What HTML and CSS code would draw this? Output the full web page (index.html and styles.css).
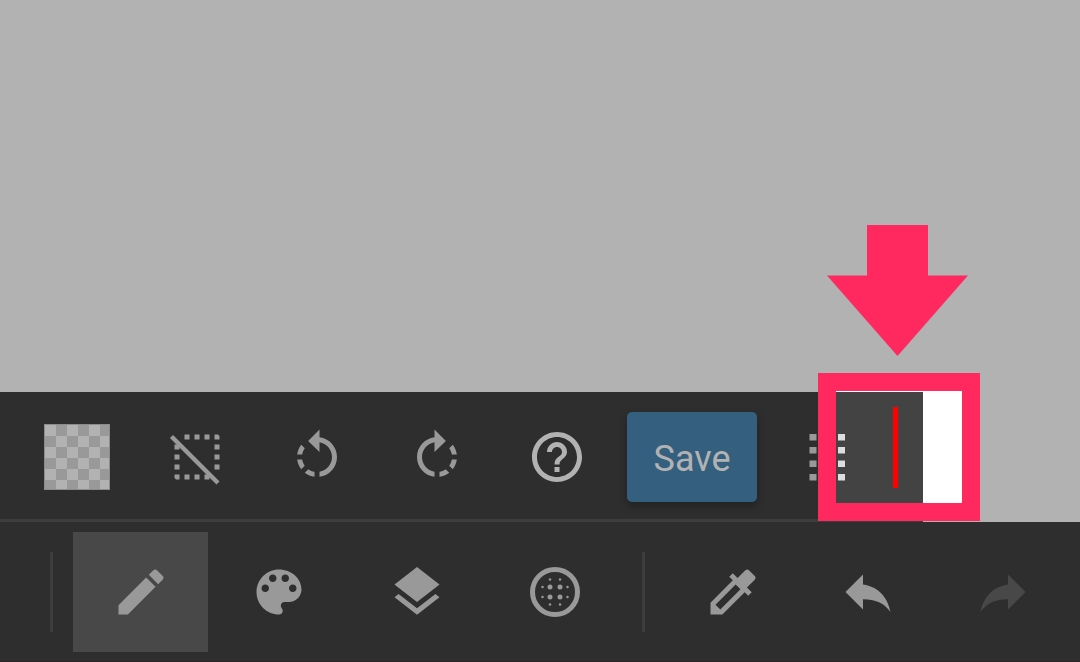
FILE: index.html
```html
<!DOCTYPE html>
<html lang="en">
<head>
    <meta charset="UTF-8">
    <meta name="viewport" content="width=device-width, initial-scale=1.0">
    <title>Paint</title>
    <link rel="stylesheet" href="styles.css">
</head>
<body>
    <main class="canvas"></main>

    <div class="toolbar">
        <button class="tool" aria-label="Background"><span class="checker"></span></button>
        <button class="tool" aria-label="Deselect">
            <svg class="icon" viewBox="0 0 60 60">
                <path d="M17.5 7.5h5v5h-5zM27.5 7.5h5v5h-5zM37.5 7.5h5v5h-5zM47.5 7.5h3.5l1.5 1.5v3.5h-5zM7.5 17.5h5v5h-5zM47.5 17.5h5v5h-5zM7.5 27.5h5v5h-5zM47.5 27.5h5v5h-5zM7.5 37.5h5v5h-5zM47.5 37.5h5v5h-5zM7.5 47.5h5v5H9l-1.5-1.5zM17.5 47.5h5v5h-5zM27.5 47.5h5v5h-5zM37.5 47.5h5v5h-5z"/>
                <path d="M4.5 9.5L51 56" fill="none" stroke="currentColor" stroke-width="4.5"/>
            </svg>
        </button>
        <button class="tool" aria-label="Rotate left">
            <svg class="icon" viewBox="0 0 24 24"><path d="M7.11 8.53L5.7 7.11C4.8 8.27 4.24 9.61 4.07 11h2.02c.14-.87.49-1.72 1.02-2.47zM6.09 13H4.07c.17 1.39.72 2.73 1.62 3.89l1.41-1.42c-.52-.75-.87-1.59-1.01-2.47zm1.01 5.32c1.16.9 2.51 1.44 3.9 1.61V17.9c-.87-.15-1.71-.49-2.46-1.03L7.1 18.32zM13 4.07V1L8.45 5.55 13 10V6.09c2.84.48 5 2.94 5 5.91s-2.16 5.43-5 5.91v2.02c3.95-.49 7-3.85 7-7.93s-3.05-7.44-7-7.93z"/></svg>
        </button>
        <button class="tool" aria-label="Rotate right">
            <svg class="icon" viewBox="0 0 24 24"><path d="M15.55 5.55L11 1v3.07C7.06 4.56 4 7.92 4 12s3.05 7.44 7 7.93v-2.02c-2.84-.48-5-2.94-5-5.91s2.16-5.43 5-5.91V10l4.55-4.45zM19.93 11c-.17-1.39-.72-2.73-1.62-3.89l-1.42 1.42c.54.75.88 1.6 1.02 2.47h2.02zM13 17.9v2.02c1.39-.17 2.74-.71 3.9-1.61l-1.44-1.44c-.75.54-1.59.89-2.46 1.03zm3.89-2.42l1.42 1.41c.9-1.16 1.45-2.5 1.62-3.89h-2.02c-.14.87-.48 1.72-1.02 2.48z"/></svg>
        </button>
        <button class="tool help" aria-label="Help">
            <svg class="icon" viewBox="0 0 24 24"><path d="M11 18h2v-2h-2v2zm1-16C6.48 2 2 6.48 2 12s4.48 10 10 10 10-4.48 10-10S17.52 2 12 2zm0 18c-4.41 0-8-3.59-8-8s3.59-8 8-8 8 3.59 8 8-3.59 8-8 8zm0-14c-2.21 0-4 1.79-4 4h2c0-1.1.9-2 2-2s2 .9 2 2c0 2-3 1.75-3 5h2c0-2.25 3-2.5 3-5 0-2.21-1.79-4-4-4z"/></svg>
        </button>
        <button class="save">Save</button>
        <button class="tool" aria-label="Stabilizer">
            <svg class="icon" viewBox="0 0 60 60"><path d="M12.5 7h7v6.500h-7zM12.500 20h7v6.500h-7zM12.500 33.500h7V40h-7zM12.500 47h7v6.500h-7z"/></svg>
        </button>

        <svg class="arrow" viewBox="0 0 141 131"><path d="M40 0h61v50.5h40L70.5 131 0 50.5h40z"/></svg>
        <div class="highlight">
            <div class="panel">
                <svg class="dots" viewBox="0 0 9 50"><path d="M2 2h7v6.500H2zM2 15h7v6.500H2zM2 28.500h7V35H2zM2 42h7v6.500H2z"/></svg>
                <span class="marker"></span>
            </div>
        </div>
    </div>

    <nav class="bottom-bar">
        <span class="divider"></span>
        <div class="modes">
            <button class="mode active" aria-label="Brush">
                <svg class="icon" viewBox="0 0 24 24"><path d="M3 17.25V21h3.75L17.81 9.94l-3.75-3.75L3 17.25zM20.71 7.04c.39-.39.39-1.02 0-1.41l-2.34-2.34c-.39-.39-1.02-.39-1.41 0l-1.83 1.83 3.75 3.75 1.83-1.83z"/></svg>
            </button>
            <button class="mode" aria-label="Color">
                <svg class="icon" viewBox="0 0 24 24"><path d="M12 3c-4.97 0-9 4.03-9 9s4.03 9 9 9c.83 0 1.5-.67 1.5-1.5 0-.39-.15-.74-.39-1.01-.23-.26-.38-.61-.38-.99 0-.83.67-1.5 1.5-1.5H16c2.76 0 5-2.24 5-5 0-4.42-4.03-8-9-8zm-5.5 9c-.83 0-1.5-.67-1.5-1.5S5.67 9 6.5 9 8 9.67 8 10.5 7.33 12 6.5 12zm3-4C8.67 8 8 7.33 8 6.5S8.67 5 9.5 5s1.5.67 1.5 1.5S10.33 8 9.5 8zm5 0c-.83 0-1.5-.67-1.5-1.5S13.67 5 14.5 5s1.5.67 1.5 1.5S15.33 8 14.5 8zm3 4c-.83 0-1.5-.67-1.5-1.5S16.67 9 17.5 9s1.5.67 1.5 1.5-.67 1.5-1.5 1.5z"/></svg>
            </button>
            <button class="mode" aria-label="Layers">
                <svg class="icon" viewBox="0 0 24 24"><path d="M11.99 18.54l-7.37-5.73L3 14.07l9 7 9-7-1.63-1.27-7.38 5.74zM12 16l7.36-5.73L21 9l-9-7-9 7 1.63 1.27L12 16z"/></svg>
            </button>
            <button class="mode" aria-label="Material">
                <svg class="icon" viewBox="0 0 24 24">
                    <circle cx="12" cy="12" r="9" fill="none" stroke="currentColor" stroke-width="2"/>
                    <circle cx="10" cy="10" r="1"/><circle cx="14" cy="10" r="1"/>
                    <circle cx="10" cy="14" r="1"/><circle cx="14" cy="14" r="1"/>
                    <circle cx="10" cy="7" r=".5"/><circle cx="14" cy="7" r=".5"/>
                    <circle cx="10" cy="17" r=".5"/><circle cx="14" cy="17" r=".5"/>
                    <circle cx="7" cy="10" r=".5"/><circle cx="7" cy="14" r=".5"/>
                    <circle cx="17" cy="10" r=".5"/><circle cx="17" cy="14" r=".5"/>
                </svg>
            </button>
        </div>
        <span class="divider"></span>
        <button class="mode" aria-label="Eyedropper">
            <svg class="icon" viewBox="0 0 24 24"><path d="M20.71 5.63l-2.34-2.34c-.39-.39-1.02-.39-1.41 0l-3.12 3.12-1.93-1.91-1.41 1.41 1.42 1.42L3 16.25V21h4.75l8.92-8.92 1.42 1.42 1.41-1.41-1.92-1.92 3.12-3.12c.4-.4.4-1.03.01-1.42zM6.92 19L5 17.08l8.06-8.06 1.92 1.92L6.92 19z"/></svg>
        </button>
        <button class="mode" aria-label="Undo">
            <svg class="icon" viewBox="0 0 24 24"><path d="M10 9V5l-7 7 7 7v-4.1c5 0 8.5 1.6 11 5.1-1-5-4-10-11-11z"/></svg>
        </button>
        <button class="mode" aria-label="Redo" disabled>
            <svg class="icon" viewBox="0 0 24 24"><path d="M14 9V5l7 7-7 7v-4.1c-5 0-8.5 1.6-11 5.1 1-5 4-10 11-11z"/></svg>
        </button>
    </nav>
</body>
</html>
```
FILE: styles.css
```css
* {
    box-sizing: border-box;
}
body {
    margin: 0;
    min-height: 100vh;
    display: flex;
    flex-direction: column;
    background: #b2b2b2;
    font-family: Roboto, sans-serif;
    overflow-x: hidden;
}
button {
    flex: none;
    display: flex;
    align-items: center;
    justify-content: center;
    padding: 0;
    border: none;
    background: none;
    color: #999;
    font-family: inherit;
    cursor: pointer;
}
.canvas {
    flex: 1;
}
.icon {
    width: 60px;
    height: 60px;
    fill: currentColor;
}

/* upper toolbar */
.toolbar {
    position: relative;
    align-self: flex-start;
    display: flex;
    align-items: center;
    padding: 20px 36px 17px 17px;
    background: #2e2e2e;
    border-bottom: 3px solid #3d3d3d;
}
.tool {
    width: 120px;
    height: 90px;
}
.help {
    color: #b2b2b2;
}
.checker {
    width: 66px;
    height: 66px;
    border: 1px solid #8c8c8c;
    background: repeating-conic-gradient(#999 0 25%, #b2b2b2 0 50%) 0 0 / 22px 22px;
}
.save {
    width: 130px;
    height: 90px;
    margin: 0 10px;
    padding-top: 3px;
    border-radius: 5px;
    background: #345f7f;
    color: #b2b2b2;
    font-size: 36px;
    box-shadow: 0 4px 8px rgba(0, 0, 0, 0.3);
}

/* callout drawn over the end of the toolbar */
.arrow {
    position: absolute;
    left: 827px;
    bottom: 163px;
    width: 141px;
    height: 131px;
    fill: #ff295f;
}
.highlight {
    position: absolute;
    left: 818px;
    bottom: -2px;
    width: 162px;
    height: 148px;
    padding-top: 1px;
    border: 18px solid #ff295f;
    background: #fff;
}
.panel {
    display: flex;
    align-items: center;
    justify-content: space-between;
    width: 87px;
    height: 111px;
    padding-right: 25px;
    background: #434343;
}
.dots {
    width: 9px;
    height: 50px;
    margin-top: 18px;
    fill: #dedede;
}
.marker {
    width: 5px;
    height: 81px;
    background: #f00;
}

/* bottom bar */
.bottom-bar {
    display: flex;
    align-items: center;
    height: 140px;
    padding-left: 30px;
    background: #2e2e2e;
    border-bottom: 1px solid #2a2427;
}
.modes {
    display: flex;
    gap: 3px;
}
.mode {
    width: 135px;
    height: 120px;
}
.mode.active {
    background: #484848;
}
.mode:disabled {
    color: #484848;
    cursor: default;
}
.divider {
    flex: none;
    width: 3px;
    height: 80px;
    margin: 0 20px;
    background: #3d3d3d;
}
```
